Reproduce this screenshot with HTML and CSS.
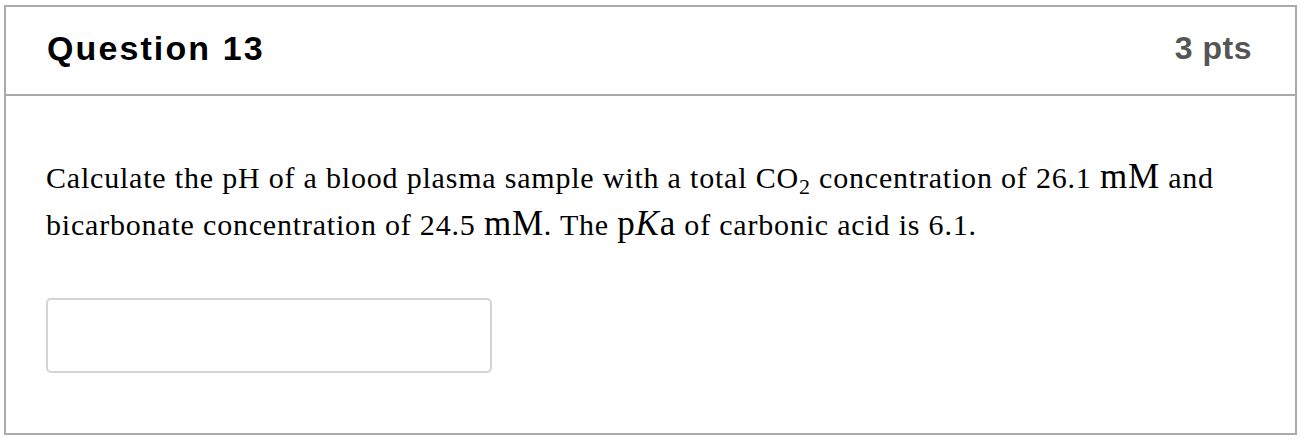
FILE: index.html
```html
<!DOCTYPE html>
<html>
<head>
<meta charset="utf-8">
<link rel="stylesheet" href="styles.css">
</head>
<body>
<div class="question">
  <div class="header">
    <h2 class="title">Question 13</h2>
    <span class="points">3 pts</span>
  </div>
  <div class="content">
    <p class="text">Calculate the pH of a blood plasma sample with a total CO<sub>2</sub> concentration of 26.1 <span class="math">mM</span> and bicarbonate concentration of 24.5 <span class="math">mM</span>. The <span class="math">p<i>K</i>a</span> of carbonic acid is 6.1.</p>
    <input class="answer" type="text">
  </div>
</div>
</body>
</html>
```

FILE: styles.css
```css
html, body {
  margin: 0;
  padding: 0;
  background: #fff;
}
.question {
  margin: 5px 0 0 4px;
  width: 1293px;
  height: 430px;
  box-sizing: border-box;
  border: 2px solid #aaa;
  display: flex;
  flex-direction: column;
}
.header {
  height: 89px;
  box-sizing: border-box;
  border-bottom: 2px solid #aaa;
  display: flex;
  align-items: center;
  justify-content: space-between;
  padding: 0 43px 4px 41px;
}
.title {
  margin: 0;
  font-family: "Liberation Sans", Arial, sans-serif;
  font-weight: bold;
  font-size: 34px;
  letter-spacing: 2.1px;
  color: #000;
}
.points {
  font-family: "Liberation Sans", Arial, sans-serif;
  font-weight: bold;
  font-size: 32px;
  letter-spacing: 0.5px;
  color: #555;
}
.content {
  flex: 1;
  padding: 58px 0 0 40px;
}
.text {
  margin: 0;
  font-family: "Liberation Serif", "Times New Roman", serif;
  font-size: 30px;
  line-height: 46px;
  letter-spacing: 0.8px;
  color: #000;
  width: 1230px;
}
.text sub {
  font-size: 22px;
  line-height: 0;
  vertical-align: -6px;
}
.math {
  font-size: 35px;
}
.answer {
  display: block;
  margin-top: 50px;
  width: 446px;
  height: 75px;
  box-sizing: border-box;
  border: 2px solid #d4d4d4;
  border-radius: 5px;
  background: #fff;
  padding: 0 10px;
  font-size: 20px;
}
```
